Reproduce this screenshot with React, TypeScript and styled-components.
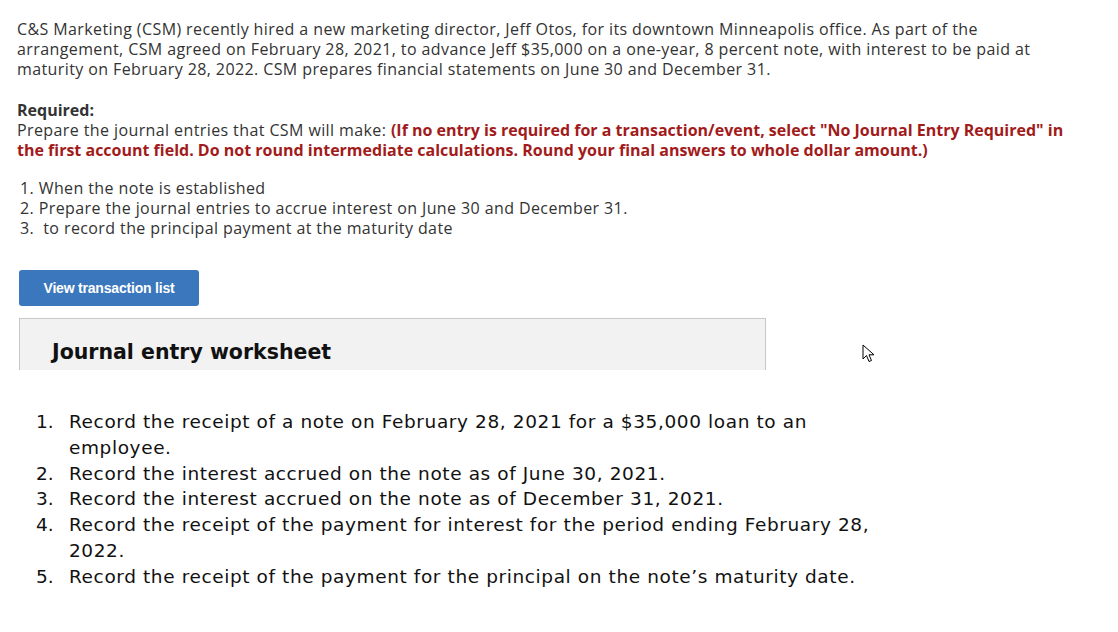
import React from "react"
import styled, { createGlobalStyle } from "styled-components"

const GlobalStyle = createGlobalStyle`
  body {
    margin: 0;
    background: #ffffff;
  }
`

const Page = styled.div`
  position: relative;
  width: 1118px;
  height: 632px;
  overflow: hidden;
  padding: 19px 0 0 17px;
  box-sizing: border-box;
  font-family: "Open Sans", Lato, sans-serif;
  font-size: 16px;
  letter-spacing: 0.4px;
  line-height: 20px;
  color: #333333;
`

const Paragraph = styled.p`
  margin: 0;
  width: 1060px;
`

const Required = styled.div`
  margin-top: 21px;
  width: 1060px;
`

const RequiredLabel = styled.div`
  font-weight: 700;
  letter-spacing: 0;
`

const Warning = styled.span`
  color: #a21b1b;
  font-weight: 700;
  letter-spacing: 0;
`

const Steps = styled.ol`
  margin: 18px 0 0 0;
  padding: 0 0 0 3px;
  list-style: none;
`

const Step = styled.li`
  line-height: 20px;
  white-space: pre;
`

const Button = styled.button`
  display: block;
  margin: 32px 0 0 2px;
  width: 180px;
  height: 36px;
  border: none;
  border-radius: 3px;
  background: #3b77bc;
  color: #ffffff;
  font-family: "Liberation Sans", Arial, sans-serif;
  font-size: 14px;
  font-weight: 700;
  letter-spacing: -0.2px;
  cursor: pointer;
`

const Worksheet = styled.div`
  margin: 12px 0 0 2px;
  width: 747px;
  height: 52px;
  box-sizing: border-box;
  background: #f2f2f2;
  border: 1px solid #c8c8c8;
  border-bottom: none;
  padding: 21px 0 0 32px;
`

const WorksheetTitle = styled.h2`
  margin: 0;
  font-family: Verdana, "DejaVu Sans", sans-serif;
  font-size: 20.5px;
  letter-spacing: 0;
  line-height: 24px;
  font-weight: 700;
  color: #111111;
`

const Tasks = styled.ol`
  margin: 39px 0 0 0;
  padding: 0 0 0 19px;
  list-style: none;
  font-family: Verdana, "DejaVu Sans", sans-serif;
  font-size: 18.5px;
  letter-spacing: 0.6px;
  line-height: 25.8px;
  color: #111111;
`

const Task = styled.li`
  display: flex;
`

const TaskNumber = styled.span`
  flex: 0 0 33px;
  letter-spacing: 0;
`

const TaskText = styled.span`
  width: 821px;
`

const Cursor = styled.svg`
  position: absolute;
  left: 862px;
  top: 344px;
`

const steps = [
  "1. When the note is established",
  "2. Prepare the journal entries to accrue interest on June 30 and December 31.",
  "3.  to record the principal payment at the maturity date",
]

const tasks = [
  "Record the receipt of a note on February 28, 2021 for a $35,000 loan to an employee.",
  "Record the interest accrued on the note as of June 30, 2021.",
  "Record the interest accrued on the note as of December 31, 2021.",
  "Record the receipt of the payment for interest for the period ending February 28, 2022.",
  "Record the receipt of the payment for the principal on the note\u2019s maturity date.",
]

export default function App() {
  return (
    <>
      <GlobalStyle />
      <Page>
        <Paragraph>
          C&amp;S Marketing (CSM) recently hired a new marketing director, Jeff Otos, for its
          downtown Minneapolis office. As part of the arrangement, CSM agreed on February 28,
          2021, to advance Jeff $35,000 on a one-year, 8 percent note, with interest to be paid at
          maturity on February 28, 2022. CSM prepares financial statements on June 30 and
          December 31.
        </Paragraph>
        <Required>
          <RequiredLabel>Required:</RequiredLabel>
          Prepare the journal entries that CSM will make:{" "}
          <Warning>
            (If no entry is required for a transaction/event, select "No Journal Entry Required" in
            the first account field. Do not round intermediate calculations. Round your final
            answers to whole dollar amount.)
          </Warning>
        </Required>
        <Steps>
          {steps.map((s) => (
            <Step key={s}>{s}</Step>
          ))}
        </Steps>
        <Button>View transaction list</Button>
        <Worksheet>
          <WorksheetTitle>Journal entry worksheet</WorksheetTitle>
        </Worksheet>
        <Tasks>
          {tasks.map((t, i) => (
            <Task key={t}>
              <TaskNumber>{i + 1}.</TaskNumber>
              <TaskText>{t}</TaskText>
            </Task>
          ))}
        </Tasks>
        <Cursor width="14" height="20" viewBox="0 0 14 20">
          <path
            d="M1 1 L1 15 L4.5 11.5 L7 17.5 L9.5 16.5 L7 10.8 L12 10.8 Z"
            fill="#ffffff"
            stroke="#000000"
            strokeWidth="1"
            strokeLinejoin="round"
          />
        </Cursor>
      </Page>
    </>
  )
}
